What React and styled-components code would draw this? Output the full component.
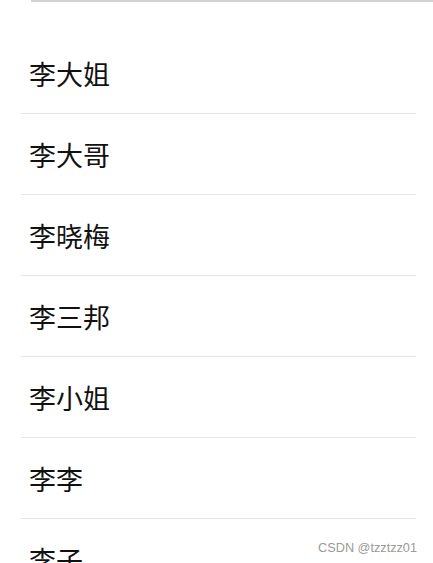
import styled, { createGlobalStyle } from "styled-components"

const GlobalStyle = createGlobalStyle`
  html, body {
    margin: 0;
    padding: 0;
    background: #ffffff;
    overflow: hidden;
  }
`

const Page = styled.div`
  width: 433px;
  height: 563px;
  overflow: hidden;
  position: relative;
  font-family: "Noto Sans CJK SC", "Noto Sans", sans-serif;
`

const SearchEdge = styled.div`
  margin-left: 31px;
  border-top: 2px solid #d2d2d2;
`

const List = styled.ul`
  list-style: none;
  margin: 31px 17px 0 21px;
  padding: 0;
`

const Row = styled.li`
  display: flex;
  align-items: center;
  height: 80px;
  padding-left: 8px;
  border-bottom: 1px solid #e6e6e6;
  font-size: 27px;
  color: #111111;
`

const Watermark = styled.div`
  position: absolute;
  right: 16px;
  bottom: 8px;
  font-family: "Liberation Sans", Arial, sans-serif;
  font-size: 12.7px;
  color: #9a9a9a;
`

const names = ["李大姐", "李大哥", "李晓梅", "李三邦", "李小姐", "李李", "李子"]

const App = () => {
  return (
    <Page>
      <GlobalStyle />
      <SearchEdge />
      <List>
        {names.map((n) => (
          <Row key={n}>{n}</Row>
        ))}
      </List>
      <Watermark>CSDN @tzztzz01</Watermark>
    </Page>
  )
}

export default App
